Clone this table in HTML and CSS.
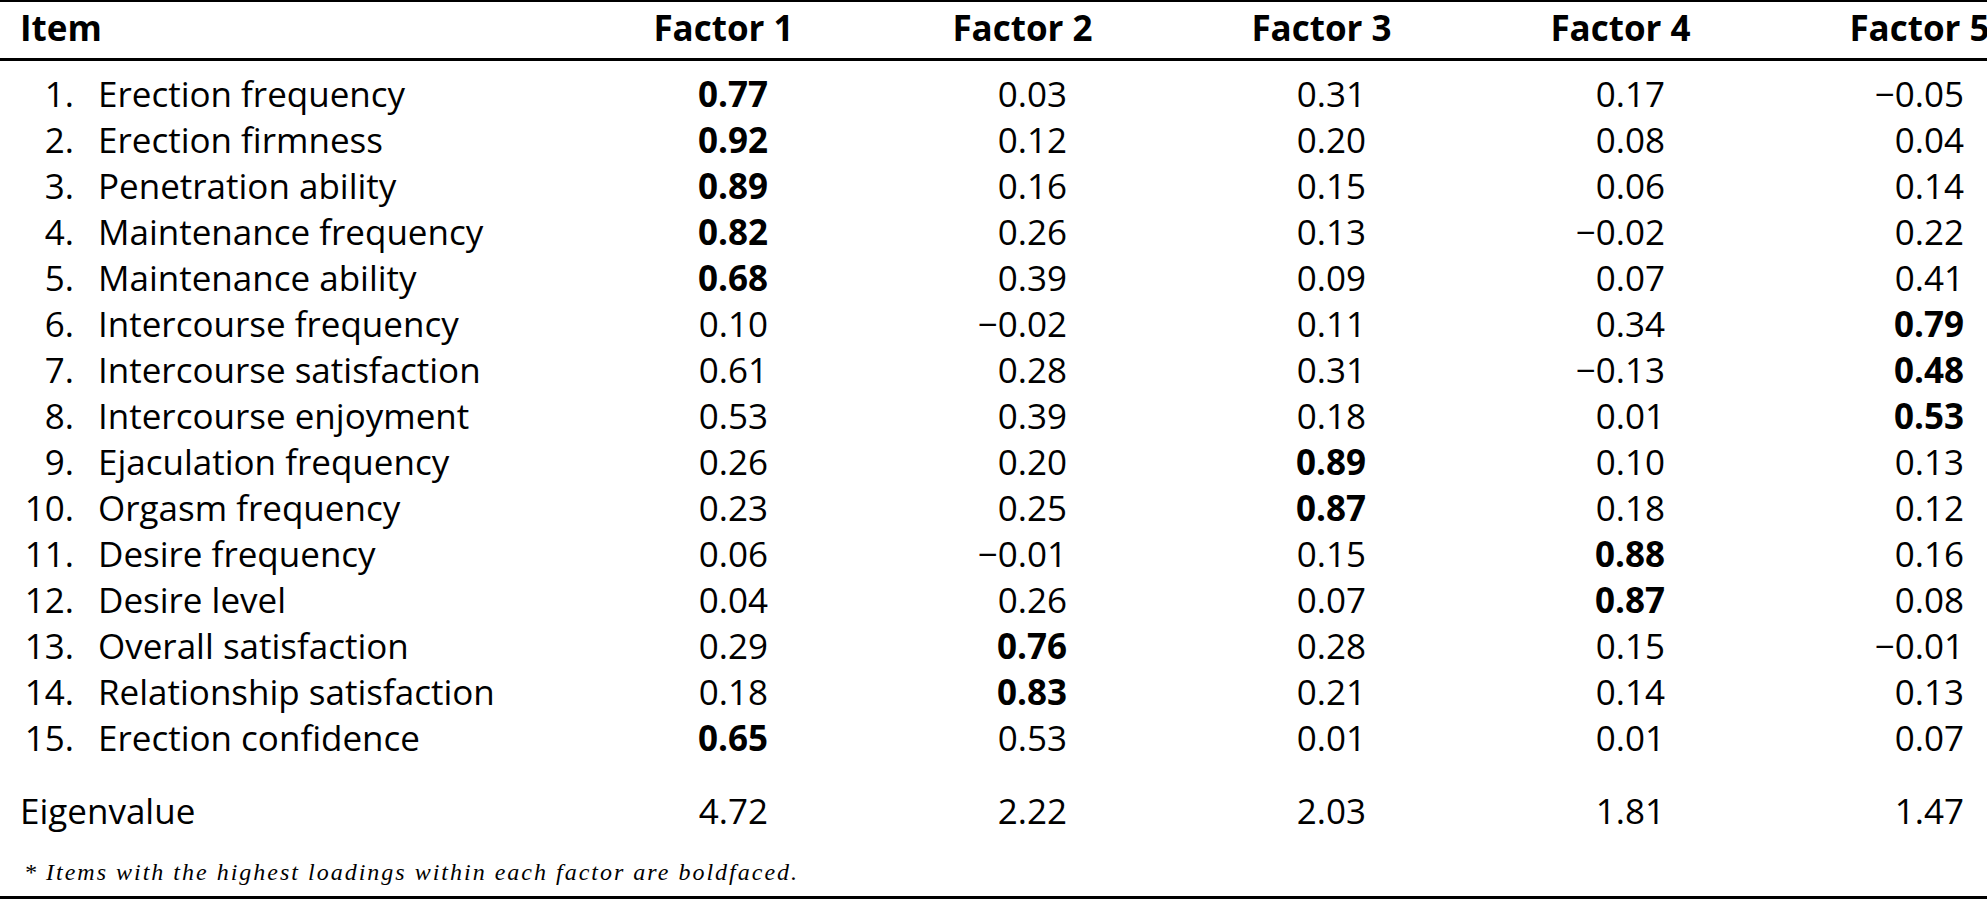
FILE: index.html
```html
<!DOCTYPE html>
<html lang="en">
<head>
<meta charset="utf-8">
<title>Factor loadings</title>
<link rel="stylesheet" href="styles.css">
</head>
<body>
<table class="loadings">
  <colgroup>
    <col class="col-item">
    <col class="col-factor"><col class="col-factor"><col class="col-factor"><col class="col-factor"><col class="col-factor">
  </colgroup>
  <thead>
    <tr>
      <th class="item-head">Item</th>
      <th>Factor 1</th>
      <th>Factor 2</th>
      <th>Factor 3</th>
      <th>Factor 4</th>
      <th>Factor 5</th>
    </tr>
  </thead>
  <tbody>
    <tr class="first">
      <td class="item"><span class="num">1.</span><span class="label">Erection frequency</span></td>
      <td class="val hi">0.77</td><td class="val">0.03</td><td class="val">0.31</td><td class="val">0.17</td><td class="val">&minus;0.05</td>
    </tr>
    <tr>
      <td class="item"><span class="num">2.</span><span class="label">Erection firmness</span></td>
      <td class="val hi">0.92</td><td class="val">0.12</td><td class="val">0.20</td><td class="val">0.08</td><td class="val">0.04</td>
    </tr>
    <tr>
      <td class="item"><span class="num">3.</span><span class="label">Penetration ability</span></td>
      <td class="val hi">0.89</td><td class="val">0.16</td><td class="val">0.15</td><td class="val">0.06</td><td class="val">0.14</td>
    </tr>
    <tr>
      <td class="item"><span class="num">4.</span><span class="label">Maintenance frequency</span></td>
      <td class="val hi">0.82</td><td class="val">0.26</td><td class="val">0.13</td><td class="val">&minus;0.02</td><td class="val">0.22</td>
    </tr>
    <tr>
      <td class="item"><span class="num">5.</span><span class="label">Maintenance ability</span></td>
      <td class="val hi">0.68</td><td class="val">0.39</td><td class="val">0.09</td><td class="val">0.07</td><td class="val">0.41</td>
    </tr>
    <tr>
      <td class="item"><span class="num">6.</span><span class="label">Intercourse frequency</span></td>
      <td class="val">0.10</td><td class="val">&minus;0.02</td><td class="val">0.11</td><td class="val">0.34</td><td class="val hi">0.79</td>
    </tr>
    <tr>
      <td class="item"><span class="num">7.</span><span class="label">Intercourse satisfaction</span></td>
      <td class="val">0.61</td><td class="val">0.28</td><td class="val">0.31</td><td class="val">&minus;0.13</td><td class="val hi">0.48</td>
    </tr>
    <tr>
      <td class="item"><span class="num">8.</span><span class="label">Intercourse enjoyment</span></td>
      <td class="val">0.53</td><td class="val">0.39</td><td class="val">0.18</td><td class="val">0.01</td><td class="val hi">0.53</td>
    </tr>
    <tr>
      <td class="item"><span class="num">9.</span><span class="label">Ejaculation frequency</span></td>
      <td class="val">0.26</td><td class="val">0.20</td><td class="val hi">0.89</td><td class="val">0.10</td><td class="val">0.13</td>
    </tr>
    <tr>
      <td class="item"><span class="num">10.</span><span class="label">Orgasm frequency</span></td>
      <td class="val">0.23</td><td class="val">0.25</td><td class="val hi">0.87</td><td class="val">0.18</td><td class="val">0.12</td>
    </tr>
    <tr>
      <td class="item"><span class="num">11.</span><span class="label">Desire frequency</span></td>
      <td class="val">0.06</td><td class="val">&minus;0.01</td><td class="val">0.15</td><td class="val hi">0.88</td><td class="val">0.16</td>
    </tr>
    <tr>
      <td class="item"><span class="num">12.</span><span class="label">Desire level</span></td>
      <td class="val">0.04</td><td class="val">0.26</td><td class="val">0.07</td><td class="val hi">0.87</td><td class="val">0.08</td>
    </tr>
    <tr>
      <td class="item"><span class="num">13.</span><span class="label">Overall satisfaction</span></td>
      <td class="val">0.29</td><td class="val hi">0.76</td><td class="val">0.28</td><td class="val">0.15</td><td class="val">&minus;0.01</td>
    </tr>
    <tr>
      <td class="item"><span class="num">14.</span><span class="label">Relationship satisfaction</span></td>
      <td class="val">0.18</td><td class="val hi">0.83</td><td class="val">0.21</td><td class="val">0.14</td><td class="val">0.13</td>
    </tr>
    <tr>
      <td class="item"><span class="num">15.</span><span class="label">Erection confidence</span></td>
      <td class="val hi">0.65</td><td class="val">0.53</td><td class="val">0.01</td><td class="val">0.01</td><td class="val">0.07</td>
    </tr>
    <tr class="eigen">
      <td class="item">Eigenvalue</td>
      <td class="val">4.72</td><td class="val">2.22</td><td class="val">2.03</td><td class="val">1.81</td><td class="val">1.47</td>
    </tr>
  </tbody>
  <tfoot>
    <tr>
      <td class="note" colspan="6">* Items with the highest loadings within each factor are boldfaced.</td>
    </tr>
  </tfoot>
</table>
</body>
</html>
```

FILE: styles.css
```css
html, body {
  margin: 0;
  padding: 0;
  background: #ffffff;
  overflow: hidden;
}

.loadings {
  border-collapse: separate;
  border-spacing: 0;
  table-layout: fixed;
  width: 2069px;
  font-family: "Open Sans", "Liberation Sans", sans-serif;
  font-size: 35px;
  line-height: 46px;
  color: #000000;
}

.col-item {
  width: 574px;
}

.col-factor {
  width: 299px;
}

.loadings th {
  font-weight: 700;
  text-align: center;
  padding: 3px 0 7px 0;
  border-top: 2px solid #000000;
  border-bottom: 3px solid #000000;
  white-space: nowrap;
}

.loadings th.item-head {
  text-align: left;
  padding-left: 20px;
}

.loadings td {
  padding: 0;
  white-space: nowrap;
}

.item {
  padding-left: 20px !important;
  text-align: left;
}

.num {
  display: inline-block;
  width: 54px;
  text-align: right;
}

.label {
  margin-left: 24px;
}

.val {
  text-align: right;
  padding-right: 105px !important;
}

.hi {
  font-weight: 700;
}

.first td {
  padding-top: 10px;
}

.eigen td {
  padding-top: 27px;
}

.note {
  font-family: "Liberation Serif", "Times New Roman", serif;
  font-style: italic;
  font-size: 24px;
  line-height: 30px;
  letter-spacing: 2px;
  padding: 23px 0 9px 24px !important;
  border-bottom: 3px solid #000000;
}
```
